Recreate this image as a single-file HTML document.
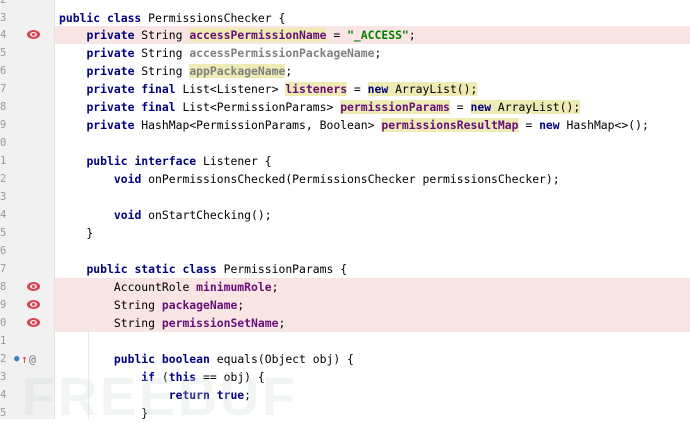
<!DOCTYPE html>
<html><head><style>
body{margin:0;width:690px;height:419px;overflow:hidden;background:#fff;position:relative;font-family:"DejaVu Sans Mono","Liberation Mono",monospace;font-size:11.4px;}
#g{position:absolute;left:0;top:0;width:54px;height:419px;background:#f1f1f1;border-right:1px solid #e2e2e2;}
.r{position:absolute;left:0;width:690px;height:18px;line-height:18px;white-space:pre;color:#000;}
.r .n{position:absolute;left:0;width:8px;color:#999;font-size:10.5px;}
.r .c{position:absolute;left:59px;}
.pk{position:absolute;left:55px;right:0;height:18px;background:#f9e5e3;}
b.k{color:#000080;}
b.f{color:#660e7a;}
b.s{color:#008000;}
.gr{color:#7f7f7f;font-weight:bold;}
.y{background:#efebb5;}
.eye{position:absolute;left:27px;top:4px;width:13px;height:9px;border-radius:50%;background:#d9414f;}
.eye:before{content:"";position:absolute;left:3px;top:2px;width:7px;height:5px;border-radius:50%;background:#fbe9e9;}
.eye:after{content:"";position:absolute;left:5px;top:3px;width:3px;height:3px;border-radius:50%;background:#d9414f;}
.guide{position:absolute;left:88px;width:1px;background:#e8e8e8;}
</style></head><body>
<div id="g"></div>
<div class="pk" style="top:26px"></div>
<div class="pk" style="top:278px;height:54px"></div>
<div class="guide" style="top:280px;height:139px"></div>
<div class="r" style="top:-9px"><span class="n">2</span></div>
<div class="r" style="top:9px"><span class="n">3</span><span class="c"><b class="k">public class</b> PermissionsChecker {</span></div>
<div class="r" style="top:26px"><span class="n">4</span><span class="eye"></span><span class="c">    <b class="k">private</b> String <b class="f y">accessPermissionName</b> = <b class="s">"_ACCESS"</b>;</span></div>
<div class="r" style="top:44px"><span class="n">5</span><span class="c">    <b class="k">private</b> String <span class="gr">accessPermissionPackageName</span>;</span></div>
<div class="r" style="top:62px"><span class="n">6</span><span class="c">    <b class="k">private</b> String <span class="gr y">appPackageName</span>;</span></div>
<div class="r" style="top:80px"><span class="n">7</span><span class="c">    <b class="k">private final</b> List&lt;Listener&gt; <b class="f y">listeners</b> = <span class="y"><b class="k">new</b> ArrayList();</span></span></div>
<div class="r" style="top:98px"><span class="n">8</span><span class="c">    <b class="k">private final</b> List&lt;PermissionParams&gt; <b class="f y">permissionParams</b> = <span class="y"><b class="k">new</b> ArrayList();</span></span></div>
<div class="r" style="top:116px"><span class="n">9</span><span class="c">    <b class="k">private</b> HashMap&lt;PermissionParams, Boolean&gt; <b class="f y">permissionsResultMap</b> = <b class="k">new</b> HashMap&lt;&gt;();</span></div>
<div class="r" style="top:134px"><span class="n">0</span></div>
<div class="r" style="top:152px"><span class="n">1</span><span class="c">    <b class="k">public interface</b> Listener {</span></div>
<div class="r" style="top:170px"><span class="n">2</span><span class="c">        <b class="k">void</b> onPermissionsChecked(PermissionsChecker permissionsChecker);</span></div>
<div class="r" style="top:188px"><span class="n">3</span></div>
<div class="r" style="top:206px"><span class="n">4</span><span class="c">        <b class="k">void</b> onStartChecking();</span></div>
<div class="r" style="top:224px"><span class="n">5</span><span class="c">    }</span></div>
<div class="r" style="top:242px"><span class="n">6</span></div>
<div class="r" style="top:260px"><span class="n">7</span><span class="c">    <b class="k">public static class</b> PermissionParams {</span></div>
<div class="r" style="top:278px"><span class="n">8</span><span class="eye"></span><span class="c">        AccountRole <b class="f">minimumRole</b>;</span></div>
<div class="r" style="top:296px"><span class="n">9</span><span class="eye"></span><span class="c">        String <b class="f">packageName</b>;</span></div>
<div class="r" style="top:314px"><span class="n">0</span><span class="eye"></span><span class="c">        String <b class="f">permissionSetName</b>;</span></div>
<div class="r" style="top:332px"><span class="n">1</span></div>
<div class="r" style="top:350px"><span class="n">2</span><span style="position:absolute;left:14px;color:#3b7fc4;font-size:9px">●</span><span style="position:absolute;left:21px;color:#d9414f">↑</span><span style="position:absolute;left:29px;color:#777">@</span><span class="c">        <b class="k">public boolean</b> equals(Object obj) {</span></div>
<div class="r" style="top:368px"><span class="n">3</span><span class="c">            <b class="k">if</b> (<b class="k">this</b> == obj) {</span></div>
<div class="r" style="top:386px"><span class="n">4</span><span class="c">                <b class="k">return true</b>;</span></div>
<div class="r" style="top:404px"><span class="n">5</span><span class="c">            }</span></div>
<div style="position:absolute;left:22px;top:366px;font:bold 54px 'Liberation Sans',sans-serif;color:rgba(200,220,205,0.25);letter-spacing:3px">FREEBUF</div>
</body></html>
